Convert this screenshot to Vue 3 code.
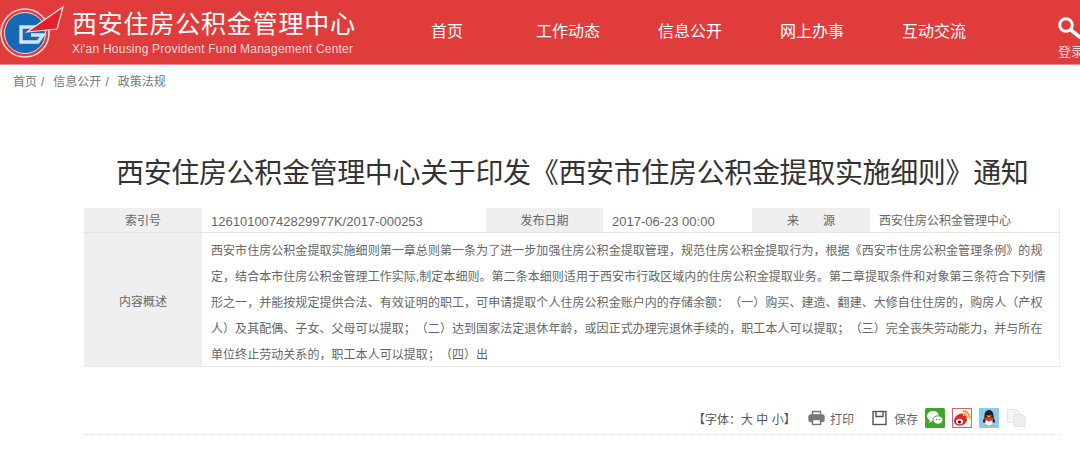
<template>
  <div class="page">
    <header class="top">
      <div class="brand">
        <svg class="logo" width="66" height="60" viewBox="0 0 66 60">
          <circle cx="25" cy="33" r="24" fill="none" stroke="#f5d9d9" stroke-width="1.6" />
          <circle cx="25" cy="33" r="20.5" fill="#1668b4" stroke="#f5d9d9" stroke-width="1" />
          <path d="M38 27H21v15h17l5-7H31" fill="none" stroke="#d5e3f0" stroke-width="3.4" />
          <path d="M63 7 57 29 27 32z" fill="#e3202a" stroke="#f7e2e2" stroke-width="1.2" />
        </svg>
        <div class="brand-text">
          <div class="cn">西安住房公积金管理中心</div>
          <div class="en">Xi'an Housing Provident Fund Management Center</div>
        </div>
      </div>
      <nav class="nav">
        <a v-for="item in navItems" :key="item">{{ item }}</a>
      </nav>
      <div class="search">
        <svg width="24" height="22" viewBox="0 0 24 22" fill="none" stroke="#fff">
          <circle cx="8" cy="8" r="6.3" stroke-width="3" />
          <path d="M13 13l10 8" stroke-width="3.6" />
        </svg>
        <span>登录</span>
      </div>
    </header>

    <div class="crumbs">
      <span>首页</span><i>/</i>
      <span>信息公开</span><i>/</i>
      <span>政策法规</span>
    </div>

    <h1 class="title">西安住房公积金管理中心关于印发《西安市住房公积金提取实施细则》通知</h1>

    <div class="info">
      <div class="label">索引号</div>
      <div class="val num">12610100742829977K/2017-000253</div>
      <div class="label">发布日期</div>
      <div class="val num">2017-06-23 00:00</div>
      <div class="label">来&emsp;&emsp;源</div>
      <div class="val">西安住房公积金管理中心</div>
      <div class="label wide">内容概述</div>
      <div class="summary">
        <p v-for="line in summary" :key="line">{{ line }}</p>
      </div>
    </div>

    <div class="tools">
      <span class="size">【字体：大 中 小】</span>
      <span class="tool print">
        <svg width="17" height="16" viewBox="0 0 17 16" fill="none" stroke="#777" stroke-width="1.4">
          <path d="M4.5 5V1.5h8V5" />
          <rect x="1" y="5" width="15" height="6.5" rx="2" fill="#777" />
          <rect x="4.5" y="9.5" width="8" height="5" fill="#fff" />
        </svg>
        打印
      </span>
      <span class="tool save">
        <svg width="15" height="16" viewBox="0 0 15 16" fill="none" stroke="#555" stroke-width="1.4">
          <rect x="1" y="1.5" width="13" height="13" />
          <path d="M4 1.5v5h7v-5" />
        </svg>
        保存
      </span>
      <div class="shares">
        <svg width="20" height="20" viewBox="0 0 20 20">
          <rect width="20" height="20" rx="1.5" fill="#3fa62c" />
          <ellipse cx="8" cy="8" rx="6" ry="5" fill="#fff" />
          <path d="M5 11.5 4 15l3.500-2z" fill="#fff" />
          <ellipse cx="13" cy="12" rx="5" ry="4.200" fill="#fff" stroke="#3fa62c" />
          <circle cx="11.500" cy="11.500" r=".8" fill="#3fa62c" />
          <circle cx="14.500" cy="11.500" r=".8" fill="#3fa62c" />
        </svg>
        <svg width="20" height="20" viewBox="0 0 20 20">
          <rect x=".5" y=".5" width="19" height="19" fill="#fdf3f0" stroke="#c66" />
          <path d="M2 13c0-4 5-8 8-7.500 1.500.5 1 2 1 2.500 3-1 4.500 0 3.500 2.500 1 1 .5 6-6 7-4 .3-6.500-2-6.500-4.500z" fill="#e0282c" />
          <ellipse cx="7.500" cy="13.500" rx="3.500" ry="2.700" fill="#fff" />
          <circle cx="7.500" cy="14" r="1.600" fill="#222" />
          <path d="M11 3a6.500 6.500 0 0 1 6.500 7.500M11.500 6a3.500 3.500 0 0 1 3.500 3.500" fill="none" stroke="#ef9a20" stroke-width="1.800" />
        </svg>
        <svg width="20" height="20" viewBox="0 0 20 20">
          <rect width="20" height="20" fill="#8ccbf0" />
          <path d="M10 2c3 0 4.500 2.500 4.500 5.500 0 3 2 5 1.500 7l-12 0c-.5-2 1.500-4 1.500-7C5.500 4.500 7 2 10 2z" fill="#222" />
          <ellipse cx="10" cy="13.500" rx="3.600" ry="3.800" fill="#fff" />
          <path d="M5.500 9.500h9l1 1.500-5.500 2.500L4.500 11z" fill="#e2302a" />
          <path d="M6.500 7.500h7L10 9.500z" fill="#f0a020" />
          <path d="M4.500 17h4.500v1.500H4.500zM11 17h4.500v1.500H11z" fill="#f0a020" />
        </svg>
        <svg width="20" height="20" viewBox="0 0 20 20" stroke="#e2e2e2" fill="#f4f4f4">
          <path d="M1.500 1.500h9l3 3v10h-12z" />
          <path d="M8 6.500h8l3 3v9H8z" fill="#ededed" />
        </svg>
      </div>
    </div>
    <div class="rule"></div>
  </div>
</template>

<script setup>
const navItems = ['首页', '工作动态', '信息公开', '网上办事', '互动交流']

const summary = [
  '西安市住房公积金提取实施细则第一章总则第一条为了进一步加强住房公积金提取管理，规范住房公积金提取行为，根据《西安市住房公积金管理条例》的规',
  '定，结合本市住房公积金管理工作实际,制定本细则。第二条本细则适用于西安市行政区域内的住房公积金提取业务。第二章提取条件和对象第三条符合下列情',
  '形之一，并能按规定提供合法、有效证明的职工，可申请提取个人住房公积金账户内的存储余额：（一）购买、建造、翻建、大修自住住房的，购房人（产权',
  '人）及其配偶、子女、父母可以提取；（二）达到国家法定退休年龄，或因正式办理完退休手续的，职工本人可以提取；（三）完全丧失劳动能力，并与所在',
  '单位终止劳动关系的，职工本人可以提取；（四）出',
]
</script>

<style>
html, body {
  margin: 0;
  background: #fff;
  overflow: hidden;
}
</style>

<style scoped>
.page {
  width: 1080px;
  height: 451px;
  overflow: hidden;
  font-family: "Liberation Sans", "Noto Sans CJK SC", sans-serif;
  color: #666;
  font-size: 12px;
  text-spacing-trim: space-all;
}

.top {
  display: flex;
  height: 64px;
  background: #e03c3c;
  border-bottom: 1px solid #e88;
  color: #fff;
}

.brand {
  display: flex;
  width: 431px;
  flex: none;
}

.logo {
  flex: none;
}

.brand-text {
  margin: 9px 0 0 6px;
}

.cn {
  font-size: 25px;
  line-height: 30px;
  letter-spacing: .8px;
  white-space: nowrap;
}

.en {
  font-size: 12px;
  line-height: 16px;
  letter-spacing: .22px;
  margin-top: 2px;
  color: #f6d8d8;
  white-space: nowrap;
}

.nav {
  display: flex;
  width: 627px;
  flex: none;
  gap: 58px;
  font-size: 16px;
  line-height: 63px;
}

.nav a:first-child {
  margin-right: 15px;
}

.search {
  flex: none;
  width: 44px;
  padding-top: 17px;
  font-size: 13px;
  line-height: 16px;
}

.search svg {
  display: block;
}

.search span {
  display: block;
  margin-top: 5px;
  white-space: nowrap;
  color: #f6d8d8;
}

.crumbs {
  padding: 9px 0 0 13px;
  line-height: 16px;
  color: #777;
}

.crumbs i {
  font-style: normal;
  margin: 0 9px 0 4px;
}

.title {
  margin: 64px 0 0;
  padding-left: 116px;
  font-size: 28px;
  line-height: 40px;
  letter-spacing: -.35px;
  font-weight: 400;
  color: #333;
  white-space: nowrap;
}

.info {
  display: grid;
  grid-template-columns: 118px 284px 117px 149px 118px 190px;
  grid-template-rows: 25px 133px;
  margin: 14px 0 0 84px;
  width: 976px;
  border-right: 1px solid #eee;
  border-bottom: 1px solid #e8e8e8;
  box-sizing: border-box;
  line-height: 23px;
}

.label {
  padding-top: 2px;
  background: #efefef;
  text-align: center;
  border-bottom: 1px solid #e4e4e4;
  box-sizing: border-box;
}

.wide {
  display: flex;
  align-items: center;
  justify-content: center;
  padding-top: 5px;
  border-bottom: 0;
}

.val {
  padding: 2px 0 0 9px;
  white-space: nowrap;
  border-bottom: 1px solid #e4e4e4;
  box-sizing: border-box;
}

.num {
  font-size: 13px;
}

.summary {
  grid-column: 2 / 7;
  padding: 5px 0 0 9px;
}

.summary p {
  margin: 0;
  line-height: 26px;
  letter-spacing: .05px;
  white-space: nowrap;
}

.tools {
  display: flex;
  align-items: center;
  height: 20px;
  margin: 41px 0 0 693px;
  white-space: nowrap;
}

.size {
  width: 115px;
  color: #555;
}

.tool {
  display: flex;
  align-items: center;
  gap: 5px;
  color: #666;
}

.print {
  width: 64px;
}

.save {
  width: 53px;
  gap: 7px;
}

.shares {
  display: flex;
  gap: 7px;
}

.rule {
  margin: 6px 20px 0 84px;
  border-top: 1px dotted #ddd;
}
</style>
